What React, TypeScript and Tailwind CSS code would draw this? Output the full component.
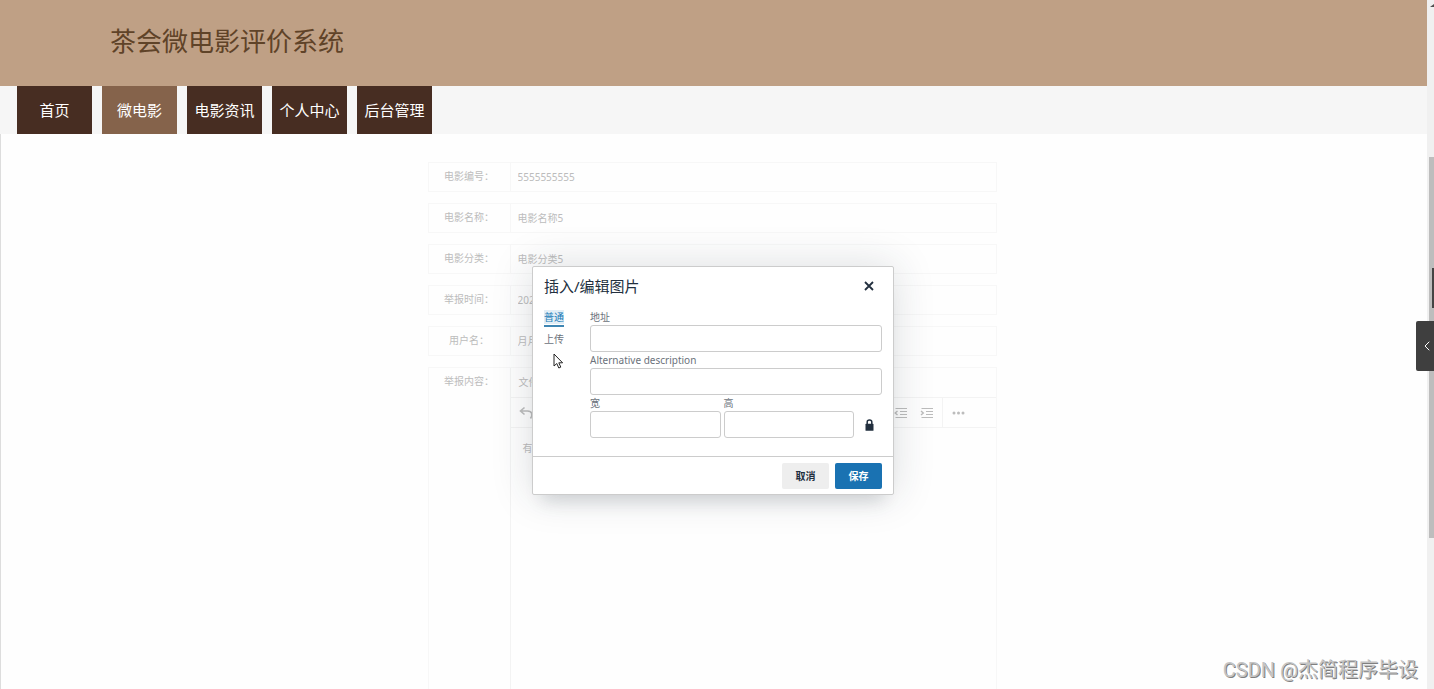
import { ChevronLeft } from "lucide-react";

type TNavItem = {
  label: string;
  active?: boolean;
};

type TField = {
  id: string;
  label: string;
  value: string;
};

const navItems: TNavItem[] = [
  { label: "首页" },
  { label: "微电影", active: true },
  { label: "电影资讯" },
  { label: "个人中心" },
  { label: "后台管理" },
];

const fields: TField[] = [
  { id: "code", label: "电影编号：", value: "5555555555" },
  { id: "name", label: "电影名称：", value: "电影名称5" },
  { id: "type", label: "电影分类：", value: "电影分类5" },
  { id: "time", label: "举报时间：", value: "2023" },
  { id: "user", label: "用户名：", value: "月月" },
];

const Header = () => (
  <header>
    <div className="flex h-[86px] items-center bg-[#bfa085] pl-[110px] pb-1">
      <h1 className="text-[26px] leading-8 text-[#5f4328]">茶会微电影评价系统</h1>
    </div>
    <nav className="flex h-12 gap-[10px] bg-[#f6f6f6] pl-[17px]">
      {navItems.map((item) => (
        <a
          key={item.label}
          href="#"
          className={`flex w-[75px] items-center justify-center text-[15px] leading-5 text-white ${
            item.active ? "bg-[#85634b]" : "bg-[#472d22]"
          }`}
        >
          {item.label}
        </a>
      ))}
    </nav>
  </header>
);

const FieldRow = ({ field }: { field: TField }) => (
  <div className="flex h-[30px] border border-[#f7f7f7]">
    <label
      htmlFor={field.id}
      className="w-[81px] shrink-0 text-center text-[10px] leading-[26px] text-[#bcbcbc]"
    >
      {field.label}
    </label>
    <input
      id={field.id}
      defaultValue={field.value}
      className="min-w-0 flex-1 border-l border-[#f7f7f7] px-[7px] text-[10px] text-[#bcbcbc] outline-none"
    />
  </div>
);

const IndentIcon = ({ out }: { out?: boolean }) => (
  <svg width="14" height="12" viewBox="0 0 14 12" fill="none" stroke="currentColor">
    <path d="M1.500 1.500h11.500M6 4.500h7M6 7.500h7M1.500 10.500h11.500" strokeWidth="1.200" />
    <path d={out ? "M3.500 4L1.200 6L3.500 8" : "M1 4L3.300 6L1 8"} strokeWidth="1.400" />
  </svg>
);

const Editor = () => (
  <div className="flex flex-1 border border-b-0 border-[#f7f7f7]">
    <span className="w-[81px] shrink-0 text-center text-[10px] leading-[26px] text-[#bcbcbc]">
      举报内容：
    </span>
    <div className="flex min-w-0 flex-1 flex-col border-l border-[#f3f3f3] text-[#bcbcbc]">
      <div className="flex h-[30px] items-center border-b border-[#f3f3f3] px-2 text-[10px]">
        文件
      </div>
      <div className="flex h-[30px] items-stretch border-b border-[#f3f3f3]">
        <div className="flex flex-1 items-center pl-2">
          <button aria-label="Undo">
            <svg width="15" height="14" viewBox="0 0 15 14" fill="none" stroke="currentColor" strokeWidth="1.6">
              <path d="M5.500 1.500L1.500 5L5.500 8.500M1.500 5H8.500C13 5 14 8.500 11.500 12.500" />
            </svg>
          </button>
        </div>
        <div className="flex items-center gap-3 border-r border-[#f3f3f3] pr-2">
          <button aria-label="Outdent">
            <IndentIcon out />
          </button>
          <button aria-label="Indent">
            <IndentIcon />
          </button>
        </div>
        <button aria-label="More" className="w-[53px] pl-[9px]">
          <svg width="13" height="4" viewBox="0 0 13 4" fill="currentColor">
            <circle cx="2" cy="2" r="1.500" />
            <circle cx="6.500" cy="2" r="1.500" />
            <circle cx="11" cy="2" r="1.500" />
          </svg>
        </button>
      </div>
      <p className="px-3 py-3 text-[10px] leading-4">有</p>
    </div>
  </div>
);

const inputClass =
  "block h-[27px] w-full rounded-[3px] border border-[#cccccc] bg-white px-1 text-xs outline-none";
const labelClass = "block text-[10px] leading-4 text-[#6b727b]";

const ImageDialog = () => (
  <div
    role="dialog"
    aria-labelledby="dialog-title"
    className="w-[362px] rounded-[2px] border border-[#cccccc] bg-white text-[#222f3e] shadow-[0_16px_16px_-10px_rgba(34,47,62,0.15),0_0_40px_1px_rgba(34,47,62,0.15)]"
  >
    <div className="flex h-[42px] items-center justify-between pl-[11px] pr-[18px] pb-1">
      <h2 id="dialog-title" className="text-[15px] leading-5">
        插入/编辑图片
      </h2>
      <button aria-label="Close">
        <svg width="12" height="12" viewBox="0 0 12 12" stroke="currentColor" strokeWidth="1.8">
          <path d="M2 2L10 10M10 2L2 10" />
        </svg>
      </button>
    </div>
    <div className="flex gap-[26px] px-[11px] pb-[18px]">
      <div className="flex flex-col items-start gap-1 text-[10px] leading-4">
        <button className="border-b-2 border-[#3f86b3] text-[#207ab7]">
          <span className="bg-[#e2eef6]">普通</span>
        </button>
        <button className="text-[#6b727b]">上传</button>
      </div>
      <form className="flex-1">
        <label htmlFor="src" className={labelClass}>
          地址
        </label>
        <input id="src" className={inputClass} />
        <label htmlFor="alt" className={labelClass}>
          Alternative description
        </label>
        <input id="alt" className={inputClass} />
        <div className="flex items-end">
          <div className="mr-[3px] flex-1">
            <label htmlFor="width" className={labelClass}>
              宽
            </label>
            <input id="width" className={inputClass} />
          </div>
          <div className="flex-1">
            <label htmlFor="height" className={labelClass}>
              高
            </label>
            <input id="height" className={inputClass} />
          </div>
          <button
            type="button"
            aria-label="Constrain proportions"
            className="flex h-[27px] w-7 items-center justify-end pr-2"
          >
            <svg width="9" height="12" viewBox="0 0 9 12">
              <rect x="0.500" y="4.800" width="8" height="7" rx="0.600" fill="currentColor" />
              <path d="M2.200 5.500V3C2.200 0.400 6.800 0.400 6.800 3V5.500" fill="none" stroke="currentColor" strokeWidth="1.500" />
            </svg>
          </button>
        </div>
      </form>
    </div>
    <div className="flex justify-end gap-[6px] border-t border-[#cccccc] px-[11px] pt-[6px] pb-[5px] text-[10px] font-bold">
      <button className="h-[26px] w-[47px] rounded-[2px] bg-[#eeeeee]">取消</button>
      <button className="h-[26px] w-[47px] rounded-[2px] bg-[#1a72b2] text-white">保存</button>
    </div>
  </div>
);

const Scrollbar = () => (
  <div className="relative flex w-[7px] shrink-0 flex-col bg-[#f0f0f0] pl-[2px]">
    <svg className="mt-1 ml-px" width="4" height="3" viewBox="0 0 4 3">
      <path d="M0 3L4 0V3Z" fill="#505050" />
    </svg>
    <div className="mt-[150px] h-[381px] bg-[#bdbdbd]" />
    <div className="absolute right-0 top-[268px] h-[40px] w-[2px] bg-[#444444]" />
    <button
      aria-label="Expand"
      className="absolute right-0 top-[321px] flex h-[50px] w-[18px] items-center justify-center rounded-l-[2px] bg-[#3f3f3f] pl-1 text-white"
    >
      <ChevronLeft size={16} strokeWidth={1.5} className="shrink-0" />
    </button>
  </div>
);

const App = () => {
  return (
    <div className="relative flex h-screen overflow-hidden bg-[#fefefe] font-['Noto_Sans','Noto_Sans_CJK_SC',sans-serif]">
      <div className="flex min-w-0 flex-1 flex-col">
        <Header />
        <main className="relative flex flex-1 flex-col border-l border-[#dddddd] pt-7 pr-1">
          <form className="mx-auto flex w-[569px] flex-1 flex-col gap-[11px]">
            {fields.map((field) => (
              <FieldRow key={field.id} field={field} />
            ))}
            <Editor />
          </form>
          <div className="absolute inset-x-0 top-[132px] flex justify-center pr-[2px]">
            <ImageDialog />
          </div>
          {/* mouse pointer */}
          <svg
            className="absolute left-1/2 top-[219px] -ml-[161px]"
            width="11"
            height="17"
            viewBox="0 0 11 17"
          >
            <path
              d="M1 1V13L3.800 10.500L5.800 15L7.800 14.100L5.800 9.800H9.600Z"
              fill="#fff"
              stroke="#222"
              strokeWidth="1"
            />
          </svg>
        </main>
      </div>
      <Scrollbar />
      <div className="absolute right-4 bottom-[5px] font-['Roboto','Noto_Sans_CJK_SC',sans-serif] text-xl leading-7 text-[#c4c4c4] [text-shadow:1px_1px_0_#808080]">
        CSDN @杰简程序毕设
      </div>
    </div>
  );
};

export default App;
